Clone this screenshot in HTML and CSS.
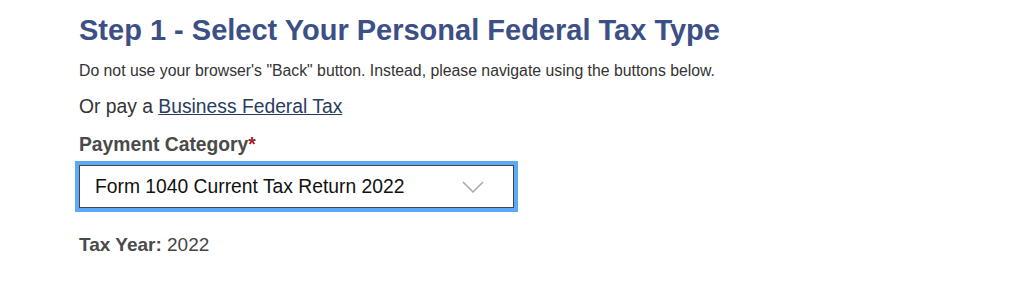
FILE: index.html
```html
<!DOCTYPE html>
<html>
<head>
<meta charset="utf-8">
<link rel="stylesheet" href="styles.css">
</head>
<body>
<main class="page">
  <h1 class="title">Step 1 - Select Your Personal Federal Tax Type</h1>
  <p class="note">Do not use your browser's "Back" button. Instead, please navigate using the buttons below.</p>
  <p class="alt">Or pay a <a href="#" class="link">Business Federal Tax</a></p>
  <div class="field">
    <label class="label">Payment Category<span class="req">*</span></label>
    <div class="select">
      <span class="select-text">Form 1040 Current Tax Return 2022</span>
      <svg class="chevron" width="22" height="12" viewBox="0 0 22 12"><path d="M1 1 L11 11 L21 1" fill="none" stroke="#a8a8a8" stroke-width="1.5"/></svg>
    </div>
  </div>
  <p class="year"><b>Tax Year:</b> 2022</p>
</main>
</body>
</html>
```

FILE: styles.css
```css
html, body { margin: 0; padding: 0; background: #fff; }
body { font-family: "Liberation Sans", Arial, sans-serif; color: #333; }
.page { padding: 14px 0 0 79px; }
.title { margin: 0; font-size: 29px; font-weight: bold; color: #3c4f86; line-height: 32px; }
.note { margin: 16px 0 0; font-size: 15.8px; line-height: 18px; color: #333; }
.alt { margin: 15px 0 0; font-size: 19.3px; line-height: 24px; color: #333; }
.link { color: #283c5e; text-decoration: underline; }
.field { margin-top: 14px; }
.label { display: block; font-size: 19.3px; font-weight: bold; line-height: 24px; color: #4a4a4a; }
.req { color: #a32020; }
.select { margin-top: 8px; height: 43px; width: 435px; box-sizing: border-box; border: 1px solid #444; box-shadow: 0 0 0 4px #5ca9f5; display: flex; align-items: center; justify-content: space-between; padding: 0 29px 0 15px; }
.select-text { font-size: 19.3px; color: #111; }
.chevron { display: block; margin-top: 1px; }
.year { margin: 26px 0 0; font-size: 19px; color: #444; }
.year b { color: #4a4a4a; }
```
